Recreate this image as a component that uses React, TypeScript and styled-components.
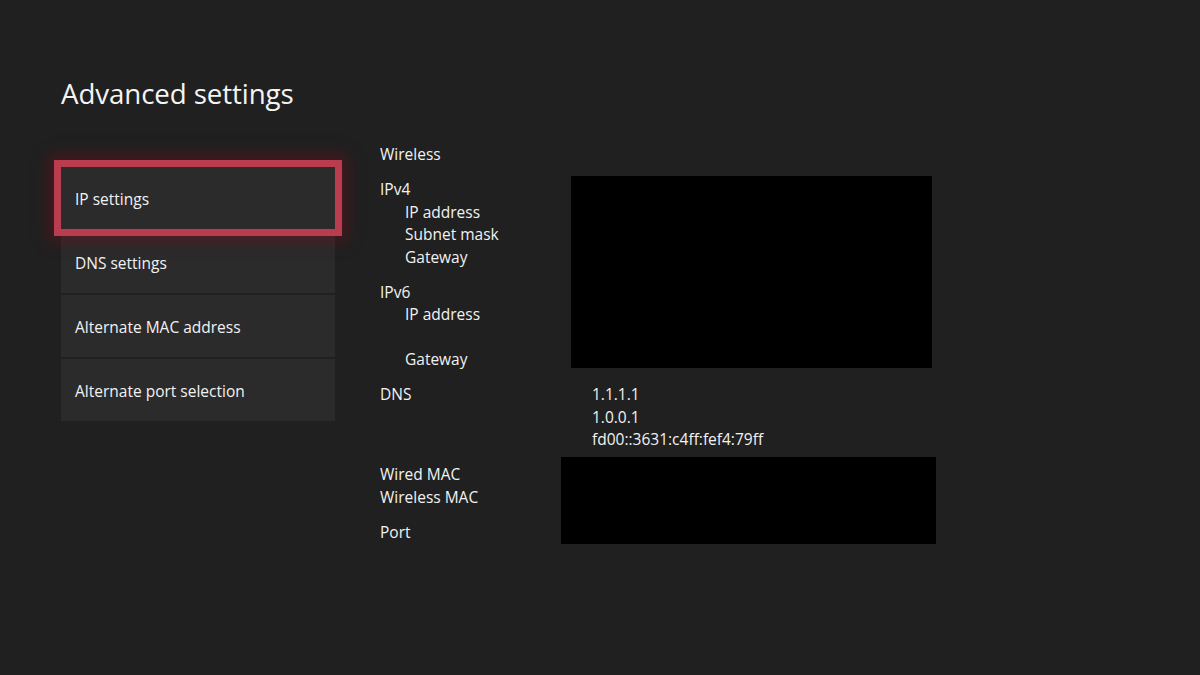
import React from 'react';
import styled, { createGlobalStyle } from 'styled-components';

const GlobalStyle = createGlobalStyle`
  html, body {
    margin: 0;
    padding: 0;
    background: #202020;
  }
  body {
    font-family: 'Open Sans', 'Noto Sans', sans-serif;
    color: #f2f2f2;
  }
`;

const Page = styled.div`
  width: 1200px;
  height: 675px;
  overflow: hidden;
  background: #202020;
  padding: 73px 0 0 61px;
  box-sizing: border-box;
`;

const Title = styled.h1`
  margin: 0;
  font-size: 27.7px;
  font-weight: 400;
  line-height: 40px;
  letter-spacing: -0.1px;
  color: #f4f4f4;
`;

const Body = styled.div`
  display: flex;
  align-items: flex-start;
  margin-top: 54px;
`;

const Menu = styled.div`
  width: 274px;
  display: flex;
  flex-direction: column;
  gap: 2px;
`;

const Tile = styled.div<{ $focused?: boolean }>`
  position: relative;
  height: 62px;
  box-sizing: border-box;
  display: flex;
  align-items: center;
  padding: 2px 0 0 14px;
  background: #2b2b2b;
  font-size: 15.5px;
  color: #f2f2f2;
  ${({ $focused }) =>
    $focused &&
    `
    z-index: 1;
    outline: 7px solid #b93c4f;
    box-shadow: 0 0 14px 12px rgba(110, 14, 28, 0.5);
  `}
`;

const Details = styled.div`
  margin-left: 45px;
  margin-top: -24px;
  display: grid;
  grid-template-columns: 191px 380px;
  row-gap: 12.5px;
  font-size: 15.5px;
  line-height: 22.5px;
`;

const Group = styled.div<{ $row: number }>`
  grid-column: 1;
  grid-row: ${({ $row }) => $row};
  display: flex;
  flex-direction: column;
`;

const Heading = styled.div``;

const Sub = styled.div<{ $blank?: boolean }>`
  padding-left: 25px;
  min-height: 22.5px;
`;

const Redacted = styled.div<{ $rows: string; $shift: number; $width: number }>`
  grid-column: 2;
  grid-row: ${({ $rows }) => $rows};
  margin-left: ${({ $shift }) => $shift}px;
  width: ${({ $width }) => $width}px;
  background: #000;
`;

const Values = styled.div<{ $row: number }>`
  grid-column: 2;
  grid-row: ${({ $row }) => $row};
  padding-left: 21px;
  display: flex;
  flex-direction: column;
`;

const menuItems = [
  'IP settings',
  'DNS settings',
  'Alternate MAC address',
  'Alternate port selection',
];

export default function App() {
  return (
    <Page>
      <GlobalStyle />
      <Title>Advanced settings</Title>
      <Body>
        <Menu>
          {menuItems.map((item, i) => (
            <Tile key={item} $focused={i === 0}>
              {item}
            </Tile>
          ))}
        </Menu>
        <Details>
          <Group $row={1}>
            <Heading>Wireless</Heading>
          </Group>
          <Group $row={2}>
            <Heading>IPv4</Heading>
            <Sub>IP address</Sub>
            <Sub>Subnet mask</Sub>
            <Sub>Gateway</Sub>
          </Group>
          <Group $row={3}>
            <Heading>IPv6</Heading>
            <Sub>IP address</Sub>
            <Sub $blank />
            <Sub>Gateway</Sub>
          </Group>
          <Redacted
            $rows="2 / 4"
            $shift={0}
            $width={361}
            style={{ marginTop: -2, marginBottom: 3 }}
          />
          <Group $row={4}>
            <Heading>DNS</Heading>
          </Group>
          <Values $row={4}>
            <div>1.1.1.1</div>
            <div>1.0.0.1</div>
            <div>fd00::3631:c4ff:fef4:79ff</div>
          </Values>
          <Group $row={5}>
            <Heading>Wired MAC</Heading>
            <Heading>Wireless MAC</Heading>
          </Group>
          <Group $row={6}>
            <Heading>Port</Heading>
          </Group>
          <Redacted
            $rows="5 / 7"
            $shift={-10}
            $width={375}
            style={{ marginTop: -6, marginBottom: -1 }}
          />
        </Details>
      </Body>
    </Page>
  );
}
